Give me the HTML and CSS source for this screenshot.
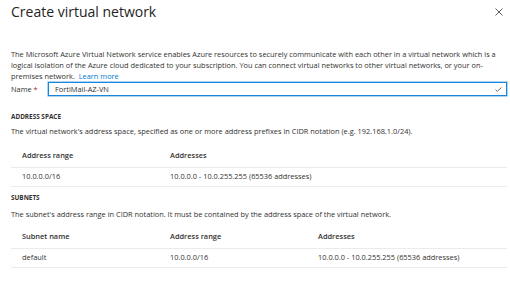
FILE: index.html
```html
<!DOCTYPE html>
<html lang="en">
<head>
<meta charset="utf-8">
<title>Create virtual network</title>
<link rel="stylesheet" href="styles.css">
</head>
<body>
<div class="panel">
  <header class="head">
    <h1 class="title">Create virtual network</h1>
    <button class="close" aria-label="Close">
      <svg width="8" height="8" viewBox="0 0 8 8"><path d="M0.5 0.5L7.5 7.5M7.5 0.5L0.5 7.5" stroke="#605e5c" stroke-width="1" fill="none"/></svg>
    </button>
  </header>
  <p class="intro"><span>The Microsoft Azure Virtual Network service enables Azure resources to securely communicate with each other in a virtual network which is a logical isolation of the Azure cloud dedicated to your subscription. You can connect virtual networks to other virtual networks, or your on-</span><span>premises network.</span>&nbsp; <a class="link" href="#">Learn more</a></p>
  <div class="field">
    <label class="label">Name <span class="req">*</span></label>
    <div class="input">
      <span class="value">FortiMail-AZ-VN</span>
      <svg class="check" width="7" height="5" viewBox="0 0 7 5"><path d="M0.5 2.5L2.3 4.3L6.5 0.5" stroke="#605e5c" stroke-width="0.9" fill="none"/></svg>
    </div>
  </div>

  <section class="section s-address">
    <h2 class="sec-title">ADDRESS SPACE</h2>
    <p class="sec-desc">The virtual network's address space, specified as one or more address prefixes in CIDR notation (e.g. 192.168.1.0/24).</p>
    <div class="table two">
      <div class="row head-row"><span>Address range</span><span>Addresses</span></div>
      <div class="row"><span>10.0.0.0/16</span><span>10.0.0.0 - 10.0.255.255 (65536 addresses)</span></div>
    </div>
  </section>

  <section class="section s-subnets">
    <h2 class="sec-title">SUBNETS</h2>
    <p class="sec-desc">The subnet's address range in CIDR notation. It must be contained by the address space of the virtual network.</p>
    <div class="table three">
      <div class="row head-row"><span>Subnet name</span><span>Address range</span><span>Addresses</span></div>
      <div class="row"><span>default</span><span>10.0.0.0/16</span><span>10.0.0.0 - 10.0.255.255 (65536 addresses)</span></div>
    </div>
  </section>
</div>
</body>
</html>
```

FILE: styles.css
```css
* { box-sizing: border-box; }
html, body { margin: 0; padding: 0; background: #ffffff; }
body {
  font-family: "Open Sans", "Noto Sans", "Liberation Sans", sans-serif;
  color: #323130;
  width: 510px;
  height: 283px;
  overflow: hidden;
}
.panel { padding: 0 3px 0 11px; }

.head {
  display: flex;
  align-items: flex-start;
  justify-content: space-between;
  height: 22px;
  padding-top: 2px;
}
.title {
  margin: 0;
  font-size: 14px;
  font-weight: 400;
  line-height: 19px;
  color: #252423;
}
.close {
  border: 0;
  background: none;
  padding: 0;
  margin: 6px 4px 0 0;
  width: 8px;
  height: 8px;
  display: flex;
}

.intro {
  margin: 27px 0 0;
  font-size: 7.4px;
  line-height: 11px;
  color: #323130;
}
.link { color: #0078d4; text-decoration: none; }

.field {
  display: flex;
  align-items: center;
  height: 14px;
  margin-top: 0;
}
.label {
  width: 37px;
  font-size: 7.4px;
  color: #323130;
}
.req { color: #a4262c; }
.input {
  flex: 1;
  height: 14px;
  border: 1px solid #1a86d9;
  box-shadow: 0 0 0 0.5px #5aa9e6;
  display: flex;
  align-items: center;
  justify-content: space-between;
  padding: 0 4px 0 6px;
  font-size: 7.4px;
  color: #323130;
}
.check { display: block; }

.sec-title {
  margin: 16px 0 0;
  font-size: 6.4px;
  font-weight: 700;
  line-height: 10px;
  color: #323130;
}
.sec-desc {
  margin: 4px 0 0;
  font-size: 7.4px;
  line-height: 11px;
}
.table { margin-top: 9px; }
.row {
  display: grid;
  align-items: center;
  height: 19px;
  padding: 0 0 2px 11px;
  border-bottom: 1px solid #edebe9;
  font-size: 7.4px;
}
.head-row { height: 22px; padding-bottom: 4px; font-weight: 600; }
.two .row { grid-template-columns: 148px 1fr; }
.three .row { grid-template-columns: 148px 148px 1fr; }

.s-subnets .sec-title { margin-top: 6px; }
.s-subnets .sec-desc { margin-top: 6px; }
.s-subnets .table { margin-top: 7px; }
```
